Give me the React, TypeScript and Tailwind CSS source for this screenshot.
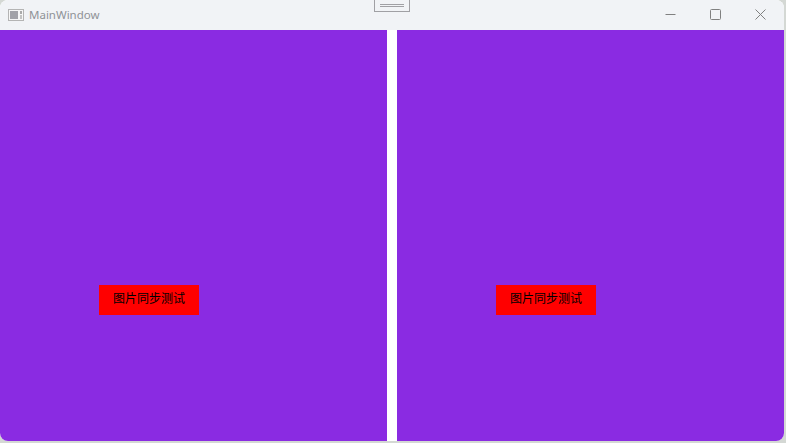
export default function App() {
  return (
    <div className="h-[443px] w-[786px] overflow-hidden bg-[#d4d8d4]">
      <div className="relative flex h-[441px] w-[784px] flex-col overflow-hidden rounded-lg bg-white">
        {/* Title bar */}
        <div className="flex h-[30px] items-center bg-[#f1f3f6] pl-2">
          <svg width="16" height="14" viewBox="0 0 16 14" className="mr-[5px] mt-[-1px]">
            <rect x="0.5" y="1.5" width="15" height="11" fill="#f6f6f6" stroke="#b4b4b4" />
            <rect x="2" y="3" width="8" height="8" fill="#a2a2a8" />
            <rect x="12" y="3" width="2" height="3" fill="#aaaaaa" />
            <rect x="12" y="7" width="2" height="4" fill="#c4c4c4" />
          </svg>
          <span className="font-['Noto_Sans',sans-serif] text-[11.5px] text-[#8f9296]">MainWindow</span>
          <div className="mb-[1px] ml-auto flex items-center">
            <div className="flex w-[45px] justify-center pr-[3px]">
              <svg width="11" height="11" viewBox="0 0 11 11">
                <path d="M0.5 5.5h10" stroke="#808080" strokeWidth="1" />
              </svg>
            </div>
            <div className="flex w-[45px] justify-center pr-[3px]">
              <svg width="11" height="11" viewBox="0 0 11 11">
                <rect x="0.5" y="0.5" width="10" height="10" rx="1" fill="none" stroke="#808080" strokeWidth="1" />
              </svg>
            </div>
            <div className="flex w-[45px] justify-center pr-[2px]">
              <svg width="11" height="11" viewBox="0 0 11 11">
                <path d="M0.5 0.5l10 10M10.5 0.5l-10 10" stroke="#808080" strokeWidth="1" />
              </svg>
            </div>
          </div>
        </div>

        {/* Design-time handle */}
        <div className="absolute left-[374px] top-[-1px] flex h-[13px] w-[36px] flex-col items-center justify-center gap-[1px] border border-[#a0a0a4] bg-[#f1f3f6]">
          <div className="h-[1px] w-[24px] bg-[#a0a0a4]" />
          <div className="h-[1px] w-[24px] bg-[#a0a0a4]" />
        </div>

        {/* Panes */}
        <div className="flex flex-1 gap-[10px]">
          <div className="flex-1 bg-[#8a2be2] pl-[99px] pt-[255px]">
            <SyncButton />
          </div>
          <div className="flex-1 bg-[#8a2be2] pl-[99px] pt-[255px]">
            <SyncButton />
          </div>
        </div>
      </div>
    </div>
  );
}

function SyncButton() {
  return (
    <div className="flex h-[30px] w-[100px] items-center justify-center bg-[#ff0000] pb-[5px] font-['Noto_Sans_CJK_SC',sans-serif] text-[12px] text-black">
      图片同步测试
    </div>
  );
}
